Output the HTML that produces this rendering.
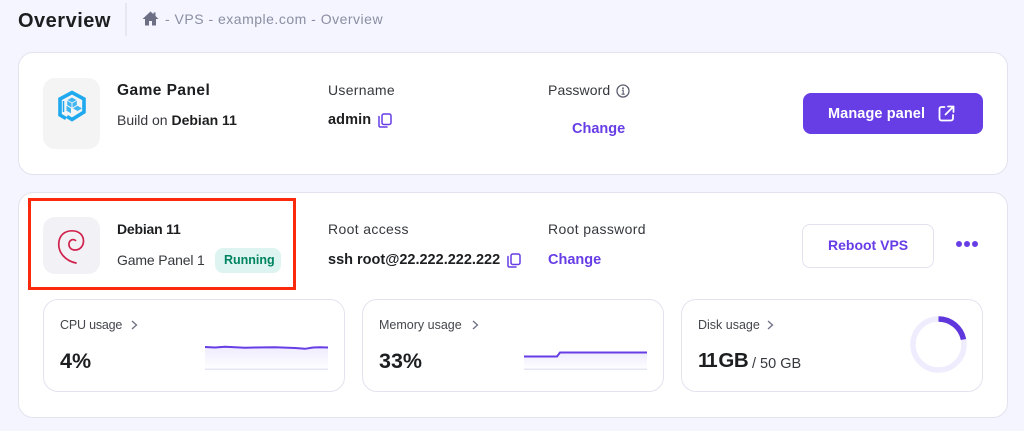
<!DOCTYPE html>
<html><head><meta charset="utf-8">
<style>
html,body{margin:0;padding:0}
body{width:1024px;height:431px;background:#f4f5ff;position:relative;overflow:hidden;font-family:"Liberation Sans",sans-serif;color:#2f3136}
.a{position:absolute;white-space:nowrap;line-height:1}
.box{position:absolute;box-sizing:border-box;background:#fff;border:1.5px solid #e2e3ee;border-radius:15px}
.ic{position:absolute;background:#f3f3f6;border-radius:12px}
.t{font-size:14px;color:#36383e}
.b{font-size:14.5px;font-weight:bold;color:#1d1e20}
.p{font-size:14.5px;font-weight:bold;color:#673de6}
svg{position:absolute;overflow:visible}
</style></head><body>
<div class="a" style="left:18px;top:11px;font-size:20px;font-weight:bold;color:#1d1e20;letter-spacing:.5px">Overview</div>
<div style="position:absolute;left:125px;top:3px;width:2px;height:33px;background:#e6e7ef"></div>
<svg style="left:142px;top:11px" width="18" height="15" viewBox="0 0 18 15"><path d="M8.500 0.500L0.500 8H3V14.500H7V10H10V14.500H14V8H16.500L13.500 5V1.500H11.500V3.200Z" fill="#6d6f85"/></svg>
<div class="a" style="left:165px;top:12px;font-size:14px;color:#8b8ea3;letter-spacing:.5px">- VPS - example.com - Overview</div>

<div class="box" style="left:18px;top:52px;width:990px;height:123px"></div>
<div class="ic" style="left:43px;top:78px;width:57px;height:71px;background:#f4f4f5"></div>
<svg style="left:57px;top:90px" width="30" height="33" viewBox="0 0 30 33"><path d="M9 28.500L3 25V9L15 2.500L27 9V22L15 29.500L10 26.500" fill="none" stroke="#1fa9ee" stroke-width="3.600"/><path d="M15 7.500L19.500 10L15 12.500L10.500 10ZM10.200 10.800L14.500 13.300V17.500L10.200 15ZM19.800 10.800V15L15.500 17.500V13.300ZM9.500 15.800L14 18.400V23.300L9.500 20.800ZM20.500 15.800L25 18.400L20.500 21L16 18.400Z" fill="#3fb6f2"/><path d="M6.500 11V22" stroke="#1fa9ee" stroke-width="1.500"/></svg>
<div class="a" style="left:117px;top:83px;font-size:15.500px;font-weight:bold;color:#1d1e20;letter-spacing:.45px">Game Panel</div>
<div class="a t" style="left:117px;top:113px">Build on <b style="color:#1d1e20">Debian 11</b></div>
<div class="a t" style="left:328px;top:83px;letter-spacing:.3px">Username</div>
<div class="a b" style="left:328px;top:113px;letter-spacing:.1px">admin</div>
<svg style="left:378px;top:113px" width="14" height="15" viewBox="0 0 14 15"><path d="M1 3.500V12.500Q1 14 2.500 14H9" fill="none" stroke="#673de6" stroke-width="1.500" stroke-linecap="round"/><rect x="4" y="1" width="9" height="10.500" rx="1.800" fill="none" stroke="#673de6" stroke-width="1.500"/></svg>
<div class="a t" style="left:548px;top:83px;letter-spacing:.1px">Password</div>
<svg style="left:616px;top:84px" width="14" height="14" viewBox="0 0 14 14"><circle cx="7" cy="7" r="6" fill="none" stroke="#5c5e70" stroke-width="1.300"/><circle cx="7" cy="4.200" r="0.900" fill="#5c5e70"/><path d="M5.800 6.200H7.200V10M5.500 10.200H8.800" fill="none" stroke="#5c5e70" stroke-width="1.100"/></svg>
<div class="a p" style="left:572px;top:122px">Change</div>
<div style="position:absolute;left:803px;top:93px;width:180px;height:41px;background:#673de6;border-radius:8px"></div>
<div class="a" style="left:828px;top:107px;font-size:14.500px;font-weight:bold;color:#fff;letter-spacing:.1px">Manage panel</div>
<svg style="left:938px;top:105px" width="17" height="17" viewBox="0 0 17 17"><path d="M6.500 2H3.500Q1.500 2 1.500 4V13Q1.500 15.500 3.500 15.500H12.500Q15 15.500 15 13V10M10 1.500H15.500V7M15.500 1.500L7.500 9.500" fill="none" stroke="#fff" stroke-width="1.800" stroke-linecap="round" stroke-linejoin="round"/></svg>

<div class="box" style="left:18px;top:192px;width:990px;height:226px"></div>
<div class="ic" style="left:43px;top:217px;width:57px;height:57px;background:#f1f1f6"></div>
<svg style="left:58px;top:230px" width="27" height="34" viewBox="0 0 27 34"><path d="M18 33C8 31 0 23 0.800 13C1.300 5 7 0.800 14 0.800C21 0.800 25.500 5 25.500 11C25.500 16 22 20 17 20C13 20 10.500 17 11 13.500C11.500 10 15 8.500 17.500 10.500" fill="none" stroke="#d0234e" stroke-width="1.700" stroke-linecap="round"/></svg>
<div class="a" style="left:117px;top:222px;font-size:14px;font-weight:bold;color:#1d1e20;letter-spacing:-.2px">Debian 11</div>
<div class="a t" style="left:117px;top:253px;letter-spacing:-.15px">Game Panel 1</div>
<div style="position:absolute;left:215px;top:248px;width:66px;height:25px;border-radius:8px;background:#def4f0"></div>
<div class="a" style="left:224px;top:254px;font-size:12.500px;font-weight:bold;color:#008361">Running</div>
<div style="position:absolute;box-sizing:border-box;left:28px;top:198px;width:268px;height:92px;border:3.500px solid #fb2a0c"></div>
<div class="a t" style="left:328px;top:222px;letter-spacing:.35px">Root access</div>
<div class="a b" style="left:328px;top:253px">ssh root@22.222.222.222</div>
<svg style="left:507px;top:253px" width="14" height="15" viewBox="0 0 14 15"><path d="M1 3.500V12.500Q1 14 2.500 14H9" fill="none" stroke="#673de6" stroke-width="1.500" stroke-linecap="round"/><rect x="4" y="1" width="9" height="10.500" rx="1.800" fill="none" stroke="#673de6" stroke-width="1.500"/></svg>
<div class="a t" style="left:548px;top:222px;letter-spacing:.35px">Root password</div>
<div class="a p" style="left:548px;top:253px">Change</div>
<div class="box" style="left:802px;top:224px;width:132px;height:44px;border-radius:8px"></div>
<div class="a p" style="left:828px;top:238px;font-size:14px">Reboot VPS</div>
<svg style="left:955px;top:240px" width="24" height="8" viewBox="0 0 24 8"><circle cx="4" cy="4" r="3" fill="#673de6"/><circle cx="12" cy="4" r="3" fill="#673de6"/><circle cx="20" cy="4" r="3" fill="#673de6"/></svg>

<div class="box" style="left:43px;top:299px;width:302px;height:93px"></div>
<div class="a" style="left:60px;top:319px;font-size:12.500px;color:#44464c;letter-spacing:-.2px">CPU usage</div>
<svg style="left:131px;top:320px" width="7" height="10" viewBox="0 0 7 10"><path d="M1 1L5.500 5L1 9" fill="none" stroke="#6d6f85" stroke-width="1.300"/></svg>
<div class="a" style="left:60px;top:351px;font-size:21.500px;font-weight:bold;color:#1d1e20">4%</div>
<svg style="left:205px;top:343px" width="123" height="28" viewBox="0 0 123 28"><defs><linearGradient id="g" x1="0" y1="0" x2="0" y2="1"><stop offset="0" stop-color="#efebfd"/><stop offset="1" stop-color="#fefeff"/></linearGradient></defs><path d="M0 4L10 4.500L20 3.800L40 4.800L50 4.500L70 4.200L90 5L100 5.800L108 4.500L115 4.300L123 4.500V26H0Z" fill="url(#g)"/><path d="M0 4L10 4.500L20 3.800L40 4.800L50 4.500L70 4.200L90 5L100 5.800L108 4.500L115 4.300L123 4.500" fill="none" stroke="#673de6" stroke-width="2"/><rect y="25.500" width="123" height="1.500" fill="#e5e6f4"/></svg>

<div class="box" style="left:362px;top:299px;width:302px;height:93px"></div>
<div class="a" style="left:379px;top:319px;font-size:12.500px;color:#44464c">Memory usage</div>
<svg style="left:472px;top:320px" width="7" height="10" viewBox="0 0 7 10"><path d="M1 1L5.500 5L1 9" fill="none" stroke="#6d6f85" stroke-width="1.300"/></svg>
<div class="a" style="left:379px;top:351px;font-size:21.500px;font-weight:bold;color:#1d1e20">33%</div>
<svg style="left:524px;top:343px" width="123" height="28" viewBox="0 0 123 28"><path d="M0 13.500H33L36 9.500H123V26H0Z" fill="url(#g)"/><path d="M0 13.500H33L36 9.500H123" fill="none" stroke="#673de6" stroke-width="2"/><rect y="25.500" width="123" height="1.500" fill="#e5e6f4"/></svg>

<div class="box" style="left:681px;top:299px;width:302px;height:93px"></div>
<div class="a" style="left:698px;top:319px;font-size:12.500px;color:#44464c">Disk usage</div>
<svg style="left:767px;top:320px" width="7" height="10" viewBox="0 0 7 10"><path d="M1 1L5.500 5L1 9" fill="none" stroke="#6d6f85" stroke-width="1.300"/></svg>
<div class="a" style="left:698px;top:351px;font-size:20.500px;font-weight:bold;color:#1d1e20;word-spacing:-3px"><span style="letter-spacing:-2px">11</span> <span style="letter-spacing:-.5px">GB</span></div>
<div class="a" style="left:752px;top:357px;font-size:14.500px;color:#36383e">/ 50 GB</div>
<svg style="left:910px;top:316px" width="57" height="57" viewBox="0 0 57 57"><circle cx="28.500" cy="28.500" r="25.500" fill="none" stroke="#efecfe" stroke-width="5.500"/><path d="M28.500 3A25.500 25.500 0 0 1 53.500 23.500" fill="none" stroke="#5f37dd" stroke-width="5.500"/></svg>
</body></html>
